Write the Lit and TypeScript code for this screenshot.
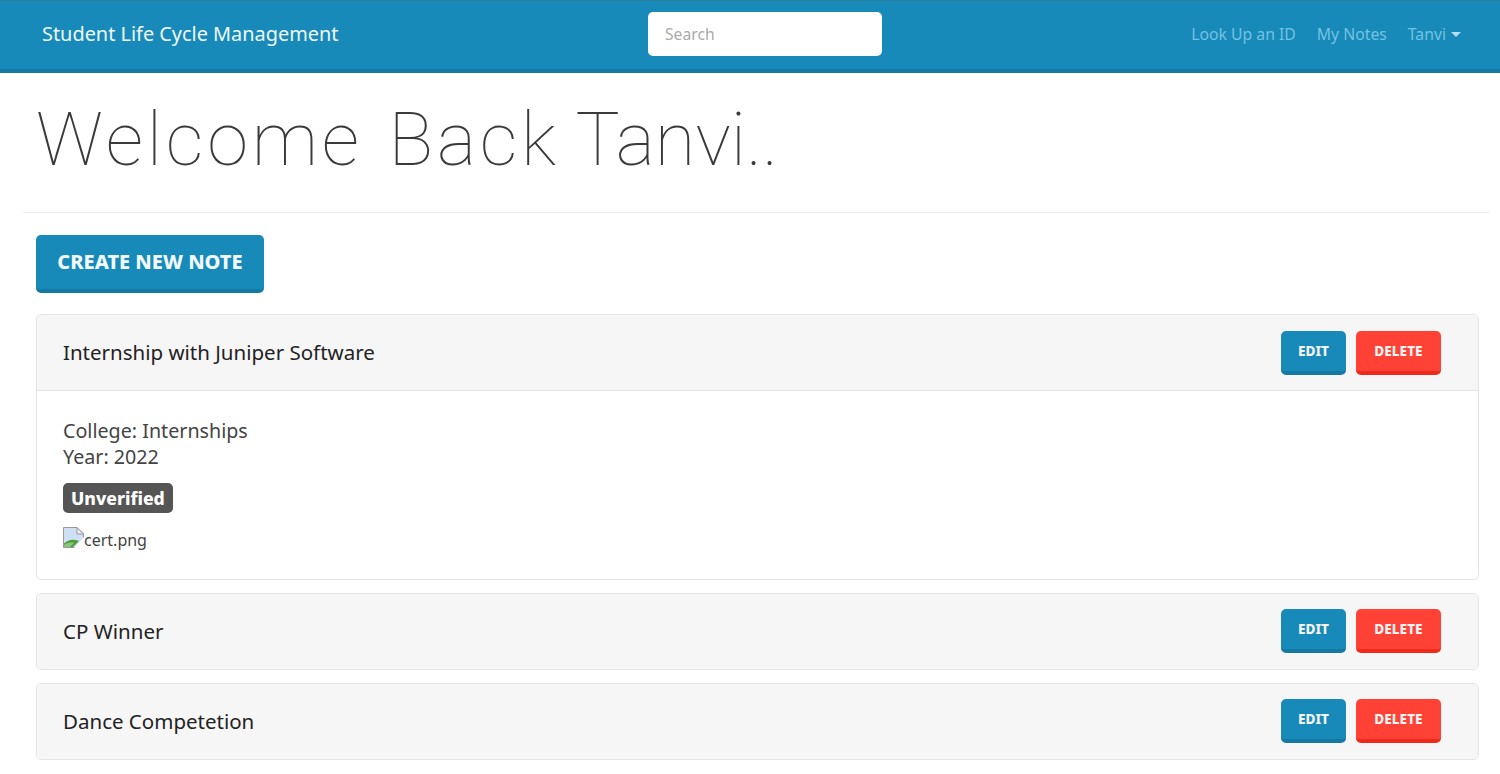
import { LitElement, html, css } from "lit";
import { customElement } from "lit/decorators.js";

interface Note { title: string; open?: boolean; }

const notes: Note[] = [
  { title: "Internship with Juniper Software", open: true },
  { title: "CP Winner" },
  { title: "Dance Competetion" },
];

@customElement("app-root")
export class AppRoot extends LitElement {
  static styles = css`
    :host { display: block; height: 774px; overflow: hidden; background: #fff; font-family: "Noto Sans", "Open Sans", sans-serif; color: #333; }
    * { box-sizing: border-box; }
    .nav { height: 73px; background: #178ab9; border-top: 1px solid #2a7f9f; border-bottom: 4px solid #1679a3; display: grid; grid-template-columns: 606px 234px 1fr; align-items: center; padding: 0 39px 2px 42px; }
    .brand { font-size: 19.9px; color: #eef7fb; line-height: 1; }
    .search { height: 44px; background: #fff; border-radius: 5px; display: flex; align-items: center; padding-left: 17px; color: #aaa; font-size: 15.7px; }
    .links { display: flex; justify-content: flex-end; align-items: center; gap: 21px; color: #74c2e2; font-size: 15.75px; }
    .caret { display: inline-block; width: 0; height: 0; border-left: 5px solid transparent; border-right: 5px solid transparent; border-top: 5px solid #b5def0; margin-left: 5px; vertical-align: 3px; }
    .hero { margin: 0 10px 0 23px; height: 140px; border-bottom: 1px solid #eee; padding-left: 13px; }
    h1 { margin: 0; font-family: "Roboto", sans-serif; font-size: 74px; font-weight: 100; line-height: 133px; color: #3a3a3a; letter-spacing: 3.8px; word-spacing: -6px; }
    h1 .lead { word-spacing: 4px; }
    h1 .last { letter-spacing: 0.1px; }
    .main { padding: 22px 21px 0 36px; }
    .create { display: flex; align-items: center; justify-content: center; width: 228px; height: 58px; padding-bottom: 2px; background: #178ab9; border-bottom: 4px solid #1679a3; border-radius: 5px; color: #f2f9fc; font-weight: 800; font-size: 20px; margin-bottom: 21px; }
    .card { border: 1px solid #e4e4e4; border-radius: 5px; margin-bottom: 13px; background: #fff; overflow: hidden; }
    .card:last-child { margin-bottom: 0; }
    .head { height: 75px; padding: 0 37px 2px 26px; background: #f6f6f6; display: flex; align-items: center; justify-content: space-between; font-size: 20.5px; color: #222; }
    .card.open .head { height: 76px; padding-bottom: 0; border-bottom: 1px solid #e4e4e4; }
    .card.open .title { margin-bottom: 2px; }
    .actions { display: flex; gap: 10px; }
    .btn { height: 44px; border-radius: 5px; color: #f3f3f3; font-weight: 800; font-size: 13.6px; display: flex; align-items: center; justify-content: center; }
    .edit { width: 65px; background: #178ab9; border-bottom: 4px solid #1679a3; }
    .delete { width: 85px; background: #ff4136; border-bottom: 4px solid #f0291d; }
    .body { height: 188px; padding: 27px 26px 0; font-size: 19.7px; line-height: 26px; color: #444; }
    .badge { display: inline-flex; align-items: center; height: 30px; margin-top: 13px; padding: 0 8px; border-radius: 5px; background: #555; color: #fff; font-weight: 800; font-size: 17.6px; }
    .image { display: flex; align-items: center; margin-top: 14px; font-size: 16px; line-height: 26px; color: #444; }
    .image svg { display: block; margin-top: -6px; flex: none; }
  `;

  render() {
    return html`
      <header class="nav">
        <div class="brand">Student Life Cycle Management</div>
        <div class="search">Search</div>
        <nav class="links">
          <span>Look Up an ID</span>
          <span>My Notes</span>
          <span>Tanvi<i class="caret"></i></span>
        </nav>
      </header>
      <div class="hero"><h1><span class="lead">Welcome </span>Back <span class="last">Tanvi..</span></h1></div>
      <main class="main">
        <div class="create">CREATE NEW NOTE</div>
        ${notes.map((n) => html`
          <section class="card ${n.open ? "open" : ""}">
            <div class="head">
              <span class="title">${n.title}</span>
              <div class="actions">
                <div class="btn edit">EDIT</div>
                <div class="btn delete">DELETE</div>
              </div>
            </div>
            ${n.open ? html`
              <div class="body">
                <div>College: Internships</div>
                <div>Year: 2022</div>
                <div class="badge">Unverified</div>
                <div class="image">
                  <svg width="21" height="21" viewBox="0 0 21 21">
                    <path d="M0.5 0.5H14L20.5 7V20.5H0.5Z" fill="#cfdff4" stroke="#999"/>
                    <path d="M14 0.5V7H20.5Z" fill="#eee" stroke="#999"/>
                    <path d="M1 20V16.5C5 12.5 10 11.5 16 14L10 20Z" fill="#4f9e3c"/>
                    <path d="M1 20V18C5 15.5 8 15 11 16L7 20Z" fill="#8cc47a"/>
                    <path d="M11 21L21 10V21Z" fill="#fff"/>
                  </svg>
                  <span>cert.png</span>
                </div>
              </div>` : ""}
          </section>`)}
      </main>
    `;
  }
}
